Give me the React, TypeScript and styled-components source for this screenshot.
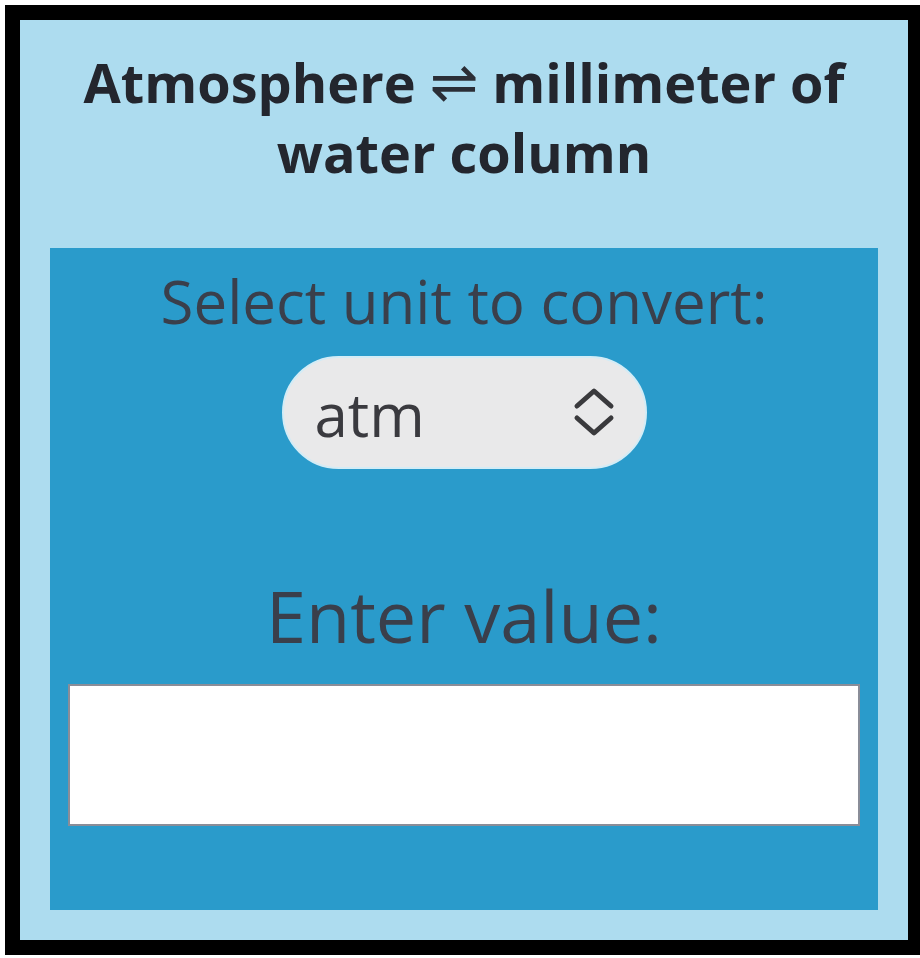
import React from 'react';
import styled, { createGlobalStyle } from 'styled-components';

const GlobalStyle = createGlobalStyle`
    body {
        margin: 0;
        padding: 5px 0 0 5px;
        background: #ffffff;
        font-family: "Open Sans", "DejaVu Sans", sans-serif;
        overflow: hidden;
    }
`

const Frame = styled.div`
    width: 888px;
    border: 15px solid #000000;
    background: #addcef;
    padding: 27px 0 30px;
`

const Title = styled.h1`
    margin: 0 30px;
    font-size: 54px;
    line-height: 70px;
    font-weight: 700;
    text-align: center;
    color: #23262e;
`

const Arrows = styled.span`
    font-family: "DejaVu Sans", sans-serif;
    font-weight: 400;
    font-size: 58px;
    line-height: 1;
    vertical-align: 1px;
    color: #2b2e36;
`

const Panel = styled.div`
    margin: 61px 30px 0;
    background: #2a9bcb;
    padding: 13px 18px 84px;
    display: flex;
    flex-direction: column;
    align-items: center;
    color: #3a3f4b;
`

const Label = styled.label<{ size: number }>`
    font-size: ${p => p.size}px;
    line-height: 1.362;
    text-align: center;
`

const SelectBox = styled.div`
    margin-top: 13px;
    width: 365px;
    height: 113px;
    box-sizing: border-box;
    border-radius: 57px;
    border: 2px solid #d3ecf6;
    background: #e9e9ea;
    display: flex;
    align-items: center;
    justify-content: space-between;
    padding: 0 30px 0 31px;
    font-size: 60px;
    color: #3a3a3f;
`

const UnitText = styled.span`
    line-height: 1;
    padding-top: 4px;
`

const Chevrons = () => (
    <svg width="42" height="50" viewBox="0 0 42 50" fill="none" stroke="#3a3a3d" strokeWidth="5" strokeLinecap="round" strokeLinejoin="round">
        <path d="M4 19 L21 4 L38 19" />
        <path d="M4 31 L21 46 L38 31" />
    </svg>
)

const EnterLabel = styled(Label)`
    margin-top: 97px;
`

const ValueInput = styled.input`
    margin-top: 20px;
    width: 100%;
    height: 142px;
    box-sizing: border-box;
    border: 2px solid #8a8d98;
    background: #ffffff;
    outline: none;
    font-family: inherit;
    font-size: 40px;
`

const App = () => {
    return (
        <>
            <GlobalStyle />
            <Frame>
                <Title>
                    Atmosphere <Arrows>⇌</Arrows> millimeter of water column
                </Title>
                <Panel>
                    <Label size={60}>Select unit to convert:</Label>
                    <SelectBox>
                        <UnitText>atm</UnitText>
                        <Chevrons />
                    </SelectBox>
                    <EnterLabel size={72}>Enter value:</EnterLabel>
                    <ValueInput type="text" />
                </Panel>
            </Frame>
        </>
    )
}

export default App;
